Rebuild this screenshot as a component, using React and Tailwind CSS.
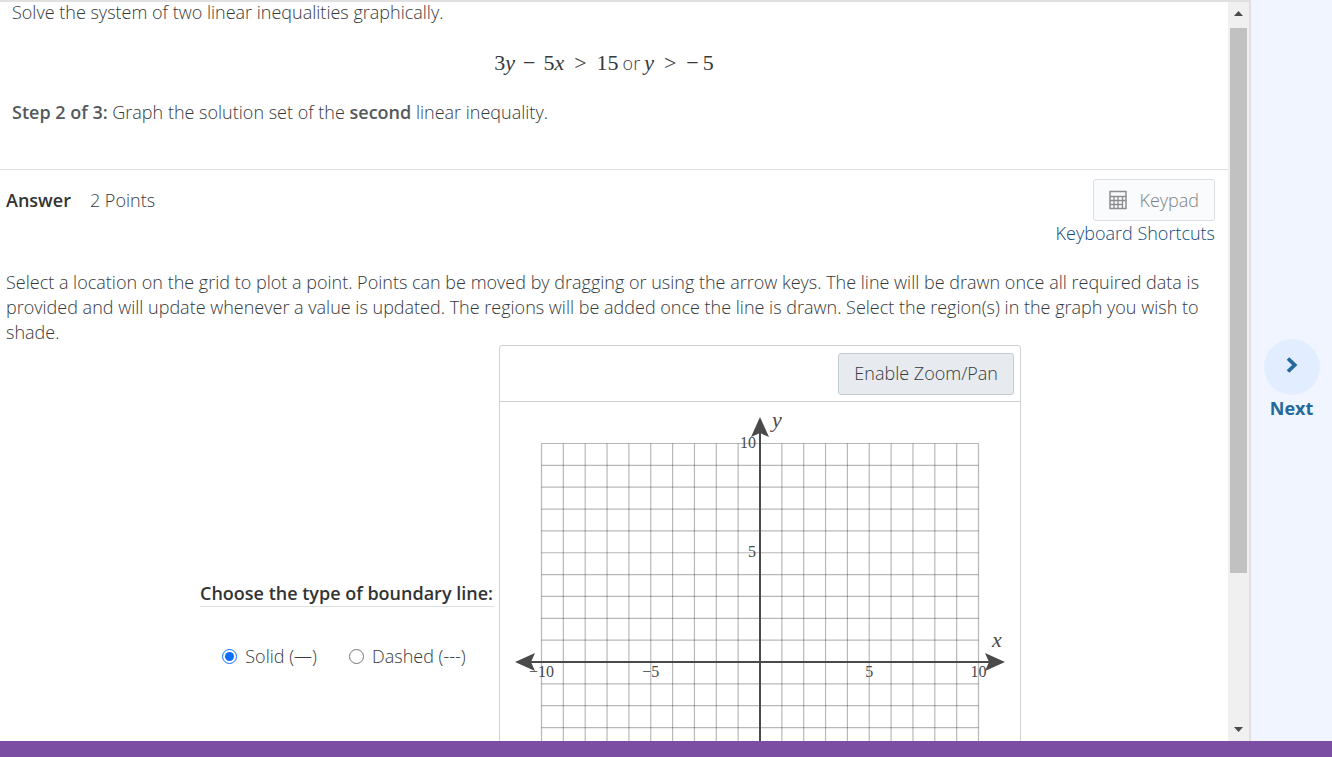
import { useState } from "react";

const SIZE = 520;
const CENTER = SIZE / 2;
const EXTENT = 10;
const HALF = 218.5;
const UNIT = HALF / EXTENT;

const gridLines = Array.from({ length: EXTENT * 2 + 1 }, (_, i) => CENTER - HALF + i * UNIT);

const xTicks = [
  { value: -10, label: "−10" },
  { value: -5, label: "−5" },
  { value: 5, label: "5" },
  { value: 10, label: "10" },
];

const yTicks = [
  { value: 10, label: "10" },
  { value: 5, label: "5" },
];

function CalculatorIcon() {
  return (
    <svg width="18" height="20" viewBox="0 0 18 20" fill="none" stroke="#8a8d90" aria-hidden="true">
      <rect x="1" y="1.5" width="16" height="17" strokeWidth="1.5" />
      <path d="M1 6.5h16" strokeWidth="1.5" />
      <path d="M1 10.5h16M1 14.5h12.5M5 6.5v12M9 6.5v12M13.5 6.5v12" strokeWidth="1.3" />
    </svg>
  );
}

function Arrow({ transform }) {
  return <path d="M0 -26 L9 -6 L0 -10 L-9 -6 Z" fill="#4a4a4a" transform={transform} />;
}

function Graph() {
  return (
    <svg
      width={SIZE}
      height={SIZE}
      viewBox={`0 0 ${SIZE} ${SIZE}`}
      className="block font-['Liberation_Serif',serif]"
      role="img"
      aria-label="Coordinate grid"
    >
      <g stroke="#000000" strokeOpacity="0.28" strokeWidth="1.2">
        {gridLines.map((pos) => (
          <g key={pos}>
            <line x1={pos} x2={pos} y1={CENTER - HALF} y2={CENTER + HALF} />
            <line y1={pos} y2={pos} x1={CENTER - HALF} x2={CENTER + HALF} />
          </g>
        ))}
      </g>

      <g stroke="#4a4a4a" strokeWidth="2">
        <line x1={CENTER} x2={CENTER} y1="26" y2="494" />
        <line y1={CENTER} y2={CENTER} x1="26" x2="494" />
      </g>
      <Arrow transform="translate(260 41)" />
      <Arrow transform="translate(260 479) rotate(180)" />
      <Arrow transform="translate(41 260) rotate(-90)" />
      <Arrow transform="translate(479 260) rotate(90)" />

      <g fill="#4a4a4a" fontSize="16">
        {xTicks.map(({ value, label }) => (
          <text key={value} x={CENTER + value * UNIT} y={CENTER + 15} textAnchor="middle">
            {label}
          </text>
        ))}
        {yTicks.map(({ value, label }) => (
          <text key={value} x={CENTER - 4} y={CENTER - value * UNIT + 4} textAnchor="end">
            {label}
          </text>
        ))}
      </g>
      <g fill="#4a4a4a" fontSize="22" fontStyle="italic">
        <text x="272" y="25">y</text>
        <text x="492" y="245">x</text>
      </g>
    </svg>
  );
}

function Operator({ children }) {
  return <span className="mx-[10px] font-['Liberation_Serif',serif] text-[22px] font-normal">{children}</span>;
}

function Term({ children }) {
  return <span className="font-['Liberation_Serif',serif] text-[22px] font-normal">{children}</span>;
}

function Question() {
  return (
    <section className="flex flex-col gap-[25px] border-b border-[#dcdfe0] pr-8 pb-11 pl-3">
      <p>Solve the system of two linear inequalities graphically.</p>
      <p className="flex h-[25px] items-baseline justify-center">
        <Term>
          3<i>y</i>
          <span className="mx-2">−</span>
          5<i>x</i>
        </Term>
        <Operator>&gt;</Operator>
        <Term>15</Term>
        <span className="mx-1">or</span>
        <Term>
          <i>y</i>
        </Term>
        <Operator>&gt;</Operator>
        <Term>
          <span className="mr-1">−</span>5
        </Term>
      </p>
      <p>
        <b className="font-semibold text-[#55595c]">Step 2 of 3:</b> Graph the solution set of the{" "}
        <b className="font-semibold text-[#55595c]">second</b> linear inequality.
      </p>
    </section>
  );
}

function BoundaryOptions() {
  const [boundary, setBoundary] = useState("solid");

  return (
    <fieldset className="shrink-0 pb-[18px]">
      <legend className="w-[294px] border-b border-[#dcdfe0] font-semibold text-[#333333]">
        Choose the type of boundary line:
      </legend>
      <div className="mt-[37px] flex justify-center gap-8 pr-[6px]">
        <label className="flex items-center gap-2">
          <input
            type="radio"
            name="boundary"
            value="solid"
            checked={boundary === "solid"}
            onChange={(event) => setBoundary(event.target.value)}
            className="size-[15px] accent-[#0d6efd]"
          />
          Solid (—)
        </label>
        <label className="flex items-center gap-2">
          <input
            type="radio"
            name="boundary"
            value="dashed"
            checked={boundary === "dashed"}
            onChange={(event) => setBoundary(event.target.value)}
            className="size-[15px] accent-[#0d6efd]"
          />
          Dashed (---)
        </label>
      </div>
    </fieldset>
  );
}

function Answer() {
  return (
    <section className="pt-[9px] pr-[13px] pl-[6px]">
      <div className="flex items-start justify-between">
        <h2 className="flex gap-[19px] pt-[9px]">
          <span className="font-semibold text-[#333333]">Answer</span>
          <span>2 Points</span>
        </h2>
        <div className="flex flex-col items-end">
          <button
            type="button"
            disabled
            className="flex h-[42px] items-center gap-3 rounded-[3px] border border-[#dadde1] bg-[#fafbfd] px-[15px] text-[#7e8184]"
          >
            <CalculatorIcon />
            Keypad
          </button>
          <a href="#shortcuts" className="text-[#0f4a7c]">
            Keyboard Shortcuts
          </a>
        </div>
      </div>

      <p className="mt-6">
        Select a location on the grid to plot a point. Points can be moved by dragging or using the arrow keys. The
        line will be drawn once all required data is provided and will update whenever a value is updated. The regions
        will be added once the line is drawn. Select the region(s) in the graph you wish to shade.
      </p>

      <div className="flex items-center justify-center gap-[5px]">
        <BoundaryOptions />
        <div className="shrink-0 rounded-[3px] border border-[#cfd1d3]">
          <div className="flex justify-end border-b border-[#cfd1d3] px-[6px] pt-[7px] pb-[6px]">
            <button
              type="button"
              className="h-[42px] rounded-[3px] border border-[#c3ccd0] bg-[#e7ebef] px-[15px] pb-[2px]"
            >
              Enable Zoom/Pan
            </button>
          </div>
          <Graph />
        </div>
      </div>
    </section>
  );
}

function ScrollTrack() {
  return (
    <div className="mt-[2px] flex w-[21px] shrink-0 flex-col items-center bg-[#f0f0f0] py-[9px]" aria-hidden="true">
      <svg width="9" height="5" viewBox="0 0 9 5" fill="#4a4a4a">
        <path d="M0 5 L4.5 0 L9 5 Z" />
      </svg>
      <div className="mt-3 mb-[9px] flex min-h-0 w-[17px] flex-1 flex-col">
        <div className="h-[79%] bg-[#c1c1c1]" />
      </div>
      <svg width="9" height="5" viewBox="0 0 9 5" fill="#4a4a4a">
        <path d="M0 0 L9 0 L4.5 5 Z" />
      </svg>
    </div>
  );
}

export default function App() {
  return (
    <div className="flex h-screen flex-col bg-white font-['Open_Sans',sans-serif] text-[18px] leading-[25px] font-light text-[#36393c]">
      <div className="flex min-h-0 flex-1">
        <div className="flex min-w-0 flex-1 border-r-2 border-[#e0e0e0] shadow-[inset_0_2px_#e0e0e0]">
          <main className="min-w-0 flex-1 overflow-hidden">
            <Question />
            <Answer />
          </main>
          <ScrollTrack />
        </div>
        <nav className="flex w-[81px] shrink-0 items-center justify-center bg-[#f0f5ff] pt-[18px]">
          <button type="button" className="flex flex-col items-center gap-px font-bold text-[#24699c]">
            <span className="flex size-14 items-center justify-center rounded-full bg-[#e2eeff] pb-1">
              <svg width="12" height="16" viewBox="0 0 12 16" fill="none" stroke="#24699c" strokeWidth="3.8">
                <path d="M2 1.5 L8.7 8 L2 14.5" />
              </svg>
            </span>
            Next
          </button>
        </nav>
      </div>
      <footer className="h-4 shrink-0 bg-[#7b4ea3]" />
    </div>
  );
}
